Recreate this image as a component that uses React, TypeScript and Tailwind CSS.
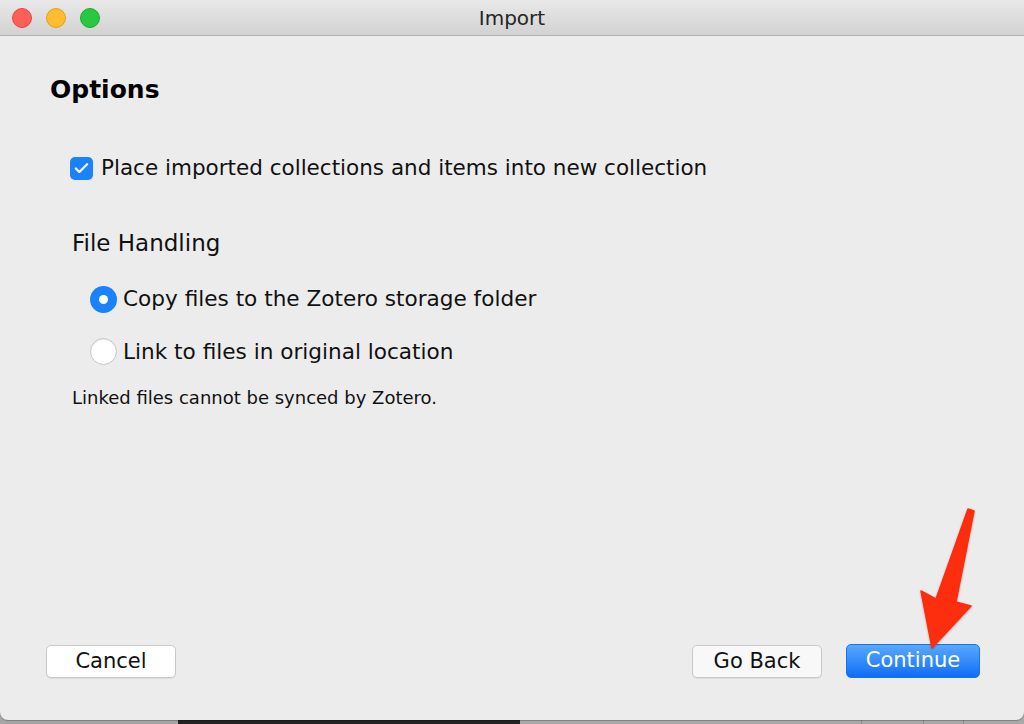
import { Check } from "lucide-react"

const font = { fontFamily: '"DejaVu Sans", "Liberation Sans", sans-serif' }

function TrafficLights() {
  return (
    <div className="flex items-center gap-[14px] pl-[12px]">
      <span className="w-[20px] h-[20px] rounded-full bg-[#fe5f57] border border-[#e2463f]" />
      <span className="w-[20px] h-[20px] rounded-full bg-[#febc2e] border border-[#e1a116]" />
      <span className="w-[20px] h-[20px] rounded-full bg-[#28c840] border border-[#1aab29]" />
    </div>
  )
}

function Arrow() {
  return (
    <svg className="absolute left-0 top-0 z-20 pointer-events-none" width="1024" height="724" viewBox="0 0 1024 724">
      <defs>
        <filter id="sh" x="-20%" y="-20%" width="140%" height="140%">
          <feDropShadow dx="0" dy="1" stdDeviation="1" floodColor="#000" floodOpacity="0.25" />
        </filter>
      </defs>
      <polygon
        points="968,509 974,511 956,602 971,606 932,648 921,591 936,599"
        fill="#fd2d0c"
        stroke="#fd2d0c"
        strokeWidth="1.5"
        strokeLinejoin="round"
        filter="url(#sh)"
      />
    </svg>
  )
}

export default function App() {
  return (
    <div className="relative w-[1024px] h-[724px] bg-[#a9a9a9] overflow-hidden" style={font}>
      <div className="flex flex-col h-[720px] bg-[#ececec] rounded-b-[8px] shadow-[0_1px_1px_rgba(0,0,0,0.25)] relative z-10">
        <div className="relative h-[36px] flex items-center bg-gradient-to-b from-[#e9e9e9] to-[#d2d2d2] border-b border-[#b2b2b2]">
          <TrafficLights />
          <div className="absolute inset-0 flex items-center justify-center text-[20px] text-[#262626]">Import</div>
        </div>

        <div className="flex-1 flex flex-col pl-[50px] pr-[44px]">
          <h1 className="mt-[41px] text-[25px] font-bold text-black leading-none">Options</h1>

          <label className="mt-[50px] ml-[20px] flex items-center gap-[8px] text-[21.5px] text-[#111]">
            <span className="w-[23px] h-[23px] rounded-[5px] bg-[#1a82fb] flex items-center justify-center">
              <Check className="w-[17px] h-[17px] text-white" strokeWidth={3.2} />
            </span>
            Place imported collections and items into new collection
          </label>

          <div className="mt-[48px] ml-[22px] text-[23px] text-[#111] leading-none">File Handling</div>

          <div className="mt-[28px] ml-[40px] flex flex-col gap-[20px]">
            <label className="flex items-center gap-[6px] text-[21.6px] text-[#111]">
              <span className="w-[27px] h-[27px] rounded-full bg-[#1a82fb] flex items-center justify-center">
                <span className="w-[9px] h-[9px] rounded-full bg-white" />
              </span>
              Copy files to the Zotero storage folder
            </label>
            <label className="flex items-center gap-[6px] text-[21.6px] text-[#111]">
              <span className="w-[27px] h-[27px] rounded-full bg-white border border-[#c4c4c4] shadow-[inset_0_1px_1px_rgba(0,0,0,0.08)]" />
              Link to files in original location
            </label>
          </div>

          <div className="mt-[16px] ml-[22px] text-[18px] text-[#111]">Linked files cannot be synced by Zotero.</div>

          <div className="mt-auto mb-[42px] flex items-center">
            <button className="w-[130px] h-[33px] -ml-[4px] bg-white border border-[#c9c9c9] rounded-[5px] text-[21px] text-[#111] shadow-[0_1px_0_rgba(0,0,0,0.06)]">
              Cancel
            </button>
            <div className="flex-1" />
            <button className="w-[130px] h-[33px] bg-[#f8f8f8] border border-[#c9c9c9] rounded-[5px] text-[21px] text-[#111] shadow-[0_1px_0_rgba(0,0,0,0.06)]">
              Go Back
            </button>
            <button className="ml-[24px] w-[134px] h-[34px] bg-gradient-to-b from-[#58a8fd] to-[#0b6cf6] border border-[#1a72e8] rounded-[5px] text-[21px] text-white">
              Continue
            </button>
          </div>
        </div>
      </div>

      <div className="absolute left-0 bottom-0 w-full h-[4px] flex">
        <div className="w-[178px] bg-[#a6a6a6]" />
        <div className="w-[342px] bg-[#232323]" />
        <div className="flex-1 bg-[#a9a9a9] border-r border-[#8f8f8f]" />
        <div className="w-[62px] bg-[#a9a9a9] border-r border-[#8f8f8f]" />
        <div className="w-[40px] bg-[#a9a9a9] border-r border-[#8f8f8f]" />
        <div className="w-[60px] bg-[#a9a9a9]" />
      </div>

      <Arrow />
    </div>
  )
}
